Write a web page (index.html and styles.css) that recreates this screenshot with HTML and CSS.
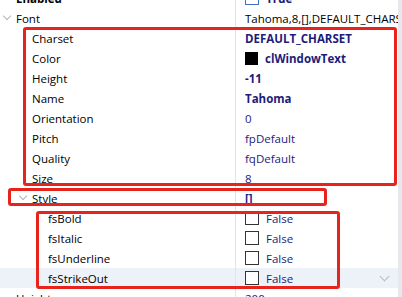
FILE: index.html
```html
<!DOCTYPE html>
<html>
<head>
<meta charset="utf-8">
<link rel="stylesheet" href="styles.css">
</head>
<body>
<div class="frame">
  <div class="grid">
    <div class="row"><div class="name lvl0 strong">Enabled</div><div class="val"><span class="chk on"></span><span class="v bold">True</span></div></div>
    <div class="row"><div class="name lvl0"><span class="chev"></span>Font</div><div class="val"><span class="plain">Tahoma,8,[],DEFAULT_CHARSET</span></div></div>
    <div class="row"><div class="name lvl1">Charset</div><div class="val"><span class="v bold">DEFAULT_CHARSET</span></div></div>
    <div class="row"><div class="name lvl1">Color</div><div class="val"><span class="swatch"></span><span class="v bold">clWindowText</span></div></div>
    <div class="row"><div class="name lvl1">Height</div><div class="val"><span class="v bold">-11</span></div></div>
    <div class="row"><div class="name lvl1">Name</div><div class="val"><span class="v bold">Tahoma</span></div></div>
    <div class="row"><div class="name lvl1">Orientation</div><div class="val"><span class="v">0</span></div></div>
    <div class="row"><div class="name lvl1">Pitch</div><div class="val"><span class="v">fpDefault</span></div></div>
    <div class="row"><div class="name lvl1">Quality</div><div class="val"><span class="v">fqDefault</span></div></div>
    <div class="row"><div class="name lvl1">Size</div><div class="val"><span class="v">8</span></div></div>
    <div class="row"><div class="name lvl1 sub"><span class="chev"></span>Style</div><div class="val"><span class="v bold">[]</span></div></div>
    <div class="row"><div class="name lvl2">fsBold</div><div class="val"><span class="chk"></span><span class="v">False</span></div></div>
    <div class="row"><div class="name lvl2">fsItalic</div><div class="val"><span class="chk"></span><span class="v">False</span></div></div>
    <div class="row"><div class="name lvl2">fsUnderline</div><div class="val"><span class="chk"></span><span class="v">False</span></div></div>
    <div class="row sel"><div class="name lvl2">fsStrikeOut</div><div class="val"><span class="chk"></span><span class="v">False</span><span class="drop"></span></div></div>
    <div class="row"><div class="name lvl0">Height</div><div class="val"><span class="v">200</span></div></div>
  </div>
  <div class="scroll"></div>
  <div class="mark m1"></div>
  <div class="mark m2"></div>
  <div class="mark m3"></div>
</div>
</body>
</html>
```
FILE: styles.css
```css
html, body {
  margin: 0;
  padding: 0;
  background: #ffffff;
}
.frame {
  position: relative;
  width: 402px;
  height: 297px;
  overflow: hidden;
  display: flex;
  align-items: flex-start;
  font-family: "Open Sans", "Noto Sans", sans-serif;
  font-size: 11.5px;
  color: #000;
}
.grid {
  flex: 1;
  margin-top: -12px;
  display: flex;
  flex-direction: column;
}
.row {
  flex: none;
  height: 20px;
  display: grid;
  grid-template-columns: 236px 1fr;
}
.row.sel {
  background: #edf1f8;
}
.name {
  position: relative;
  display: flex;
  align-items: center;
  white-space: nowrap;
  border-right: 1px solid #e4e4e4;
}
.lvl0 { padding-left: 16px; }
.lvl1 { padding-left: 32px; }
.lvl2 { padding-left: 48px; }
.strong { font-weight: bold; }
.chev {
  position: absolute;
  width: 5px;
  height: 5px;
  border-right: 1px solid #b4b4b4;
  border-bottom: 1px solid #b4b4b4;
  transform: rotate(45deg);
  top: 5px;
}
.lvl0 .chev { left: 4px; }
.lvl1 .chev { left: 20px; }
.val {
  position: relative;
  display: flex;
  align-items: center;
  padding-left: 9px;
  white-space: nowrap;
  overflow: hidden;
}
.v { color: #1c1c7a; }
.bold { font-weight: bold; }
.plain { color: #000; }
.swatch {
  width: 13px;
  height: 13px;
  background: #000;
  margin-right: 7px;
  flex: none;
}
.chk {
  width: 14px;
  height: 14px;
  box-sizing: border-box;
  border: 1px solid #333;
  background: #fff;
  margin-right: 7px;
  flex: none;
}
.chk.on {
  border-color: #3c6ec8;
  position: relative;
}
.chk.on::after {
  content: "";
  position: absolute;
  left: 4px;
  top: 3px;
  width: 3px;
  height: 5px;
  background: #2a5cc4;
}
.drop {
  position: absolute;
  right: 10px;
  top: 5px;
  width: 6px;
  height: 6px;
  border-right: 1px solid #bcbcbc;
  border-bottom: 1px solid #bcbcbc;
  transform: rotate(45deg);
}
.scroll {
  width: 4px;
  height: 297px;
  background: #e6e8ee;
  flex: none;
}
.mark {
  position: absolute;
  border: 3px solid #e8231c;
  border-radius: 3px;
  box-sizing: border-box;
}
.m1 { left: 23px; top: 27px; width: 374px; height: 159px; }
.m2 { left: 8px; top: 188px; width: 319px; height: 18px; }
.m3 { left: 36px; top: 211px; width: 304px; height: 78px; }
```
